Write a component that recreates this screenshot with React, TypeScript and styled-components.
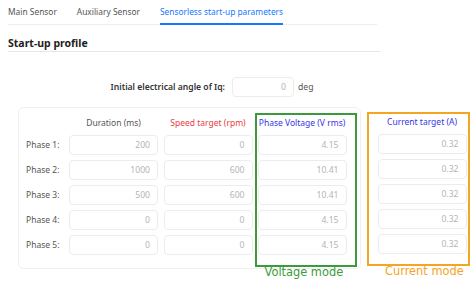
import React from "react";
import styled, { createGlobalStyle } from "styled-components";

const Global = createGlobalStyle`
  html, body { margin: 0; padding: 0; background: #fff; }
  body { font-family: "Noto Sans", "Open Sans", sans-serif; color: #333; }
  * { box-sizing: border-box; }
`;

const Page = styled.div`
  width: 474px;
  height: 281px;
  padding: 0 0 0 8px;
  overflow: hidden;
`;

const TabBar = styled.div`
  display: flex;
  gap: 20px;
  width: 369px;
  height: 25px;
  border-bottom: 1px solid #eeeeee;
`;

const Tab = styled.div<{ $active?: boolean }>`
  font-size: 8.4px;
  line-height: 24px;
  color: ${(p) => (p.$active ? "#1677ff" : "#555")};
  border-bottom: 2px solid ${(p) => (p.$active ? "#1677ff" : "transparent")};
  margin-bottom: -1px;
  white-space: nowrap;
`;

const Heading = styled.div`
  margin-top: 11px;
  width: 372px;
  font-size: 10.5px;
  font-weight: 700;
  line-height: 14px;
  color: #222;
  padding-bottom: 1px;
  border-bottom: 1px solid #e6e6e6;
`;

const AngleRow = styled.div`
  display: flex;
  align-items: center;
  margin-top: 25px;
  padding-left: 107px;
  height: 20px;
`;

const AngleLabel = styled.span`
  display: flex;
  justify-content: flex-end;
  font-size: 8.6px;
  font-weight: 600;
  color: #333;
  width: 110px;
  white-space: nowrap;
`;

const Unit = styled.span`
  font-size: 8.6px;
  color: #555;
  margin-left: 4px;
`;

const Field = styled.div<{ $w?: number }>`
  width: ${(p) => p.$w ?? 89}px;
  height: 20px;
  border: 1px solid #ececec;
  border-radius: 4px;
  background: #fff;
  font-size: 8.6px;
  line-height: 18px;
  color: #b4b4b4;
  text-align: right;
  padding-right: 7px;
`;

const AngleField = styled(Field)`
  margin-left: 7px;
`;

const Body = styled.div`
  display: flex;
  align-items: flex-start;
  margin-top: 10px;
  padding-left: 10px;
`;

const Card = styled.div`
  display: flex;
  align-items: flex-start;
  border: 1px solid #f0f0f0;
  border-radius: 6px;
  padding: 5px 3px 0 7px;
  height: 162px;
`;

const Column = styled.div<{ $color?: string; $pl?: number; $pr?: number; $ml?: number; $mt?: number }>`
  display: flex;
  flex-direction: column;
  gap: 5px;
  border: 2px solid ${(p) => p.$color ?? "transparent"};
  padding: 0 ${(p) => p.$pr ?? 0}px 10px ${(p) => p.$pl ?? 0}px;
  margin-left: ${(p) => p.$ml ?? 0}px;
  margin-top: ${(p) => p.$mt ?? 0}px;
  position: relative;
`;

const LabelColumn = styled(Column)`
  width: 41px;
  border: none;
  padding-top: 2px;
`;

const Header = styled.div<{ $color?: string }>`
  height: 16px;
  margin-bottom: -1px;
  font-size: 8.5px;
  line-height: 16px;
  text-align: center;
  white-space: nowrap;
  color: ${(p) => p.$color ?? "#555"};
`;

const RowLabel = styled.div`
  height: 20px;
  font-size: 8.5px;
  line-height: 20px;
  color: #555;
  white-space: nowrap;
`;

const Note = styled.div<{ $color: string; $left: number }>`
  position: absolute;
  top: 100%;
  left: ${(p) => p.$left}px;
  margin-top: 1px;
  font-family: "DejaVu Sans", sans-serif;
  font-size: 11.4px;
  line-height: 13px;
  color: ${(p) => p.$color};
  white-space: nowrap;
`;

const GREEN = "#3b9b3b";
const ORANGE = "#f5a524";
const BLUE = "#3434e6";
const RED = "#ee3a44";

const durations = ["200", "1000", "500", "0", "0"];
const speeds = ["0", "600", "600", "0", "0"];
const volts = ["4.15", "10.41", "10.41", "4.15", "4.15"];
const currents = ["0.32", "0.32", "0.32", "0.32", "0.32"];

export default function App() {
  return (
    <Page>
      <Global />
      <TabBar>
        <Tab>Main Sensor</Tab>
        <Tab>Auxiliary Sensor</Tab>
        <Tab $active>Sensorless start-up parameters</Tab>
      </TabBar>
      <Heading>Start-up profile</Heading>
      <AngleRow>
        <AngleLabel>Initial electrical angle of Iq:</AngleLabel>
        <AngleField $w={62}>0</AngleField>
        <Unit>deg</Unit>
      </AngleRow>
      <Body>
        <Card>
          <LabelColumn>
            <Header />
            {[1, 2, 3, 4, 5].map((n) => (
              <RowLabel key={n}>Phase {n}:</RowLabel>
            ))}
          </LabelColumn>
          <Column>
            <Header>Duration (ms)</Header>
            {durations.map((v, i) => (
              <Field key={i}>{v}</Field>
            ))}
          </Column>
          <Column $ml={1.5}>
            <Header $color={RED}>Speed target (rpm)</Header>
            {speeds.map((v, i) => (
              <Field key={i}>{v}</Field>
            ))}
          </Column>
          <Column $color={GREEN} $pl={1} $pr={8}>
            <Header $color={BLUE}>Phase Voltage (V rms)</Header>
            {volts.map((v, i) => (
              <Field key={i}>{v}</Field>
            ))}
            <Note $color={GREEN} $left={8}>Voltage mode</Note>
          </Column>
        </Card>
        <Column $color={ORANGE} $pl={8.5} $pr={1.5} $ml={6.5} $mt={5}>
          <Header $color={BLUE}>Current target (A)</Header>
          {currents.map((v, i) => (
            <Field key={i}>{v}</Field>
          ))}
          <Note $color={ORANGE} $left={16}>Current mode</Note>
        </Column>
      </Body>
    </Page>
  );
}
